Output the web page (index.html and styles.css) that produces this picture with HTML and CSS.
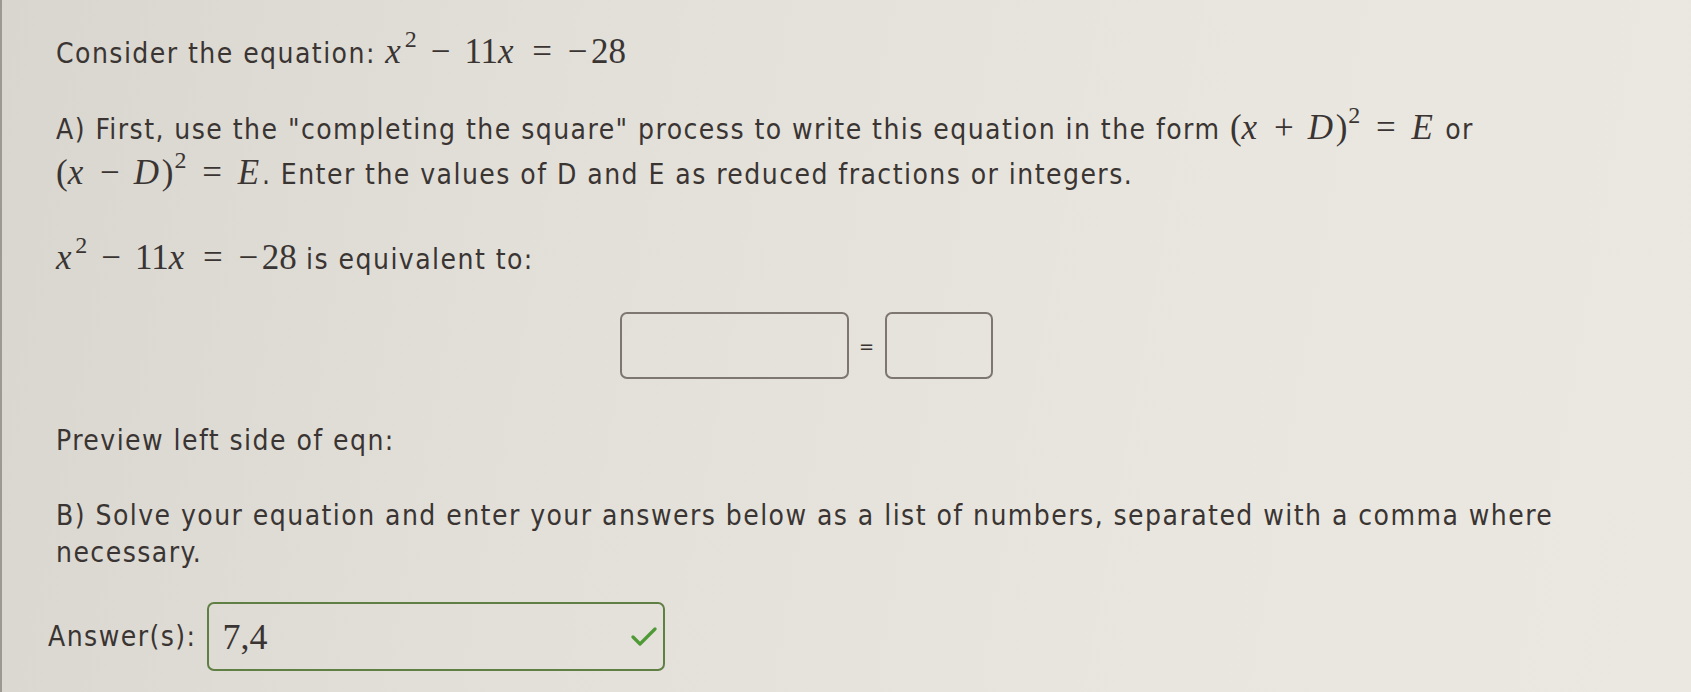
FILE: index.html
```html
<!DOCTYPE html>
<html lang="en">
<head>
  <meta charset="UTF-8">
  <title>Completing the square</title>
  <link rel="stylesheet" href="styles.css">
</head>
<body>
  <div class="problem">
    <p class="line first">Consider the equation: <span class="math"><i>x</i><sup>2</sup><span class="op">−</span>11<i>x</i><span class="rel">=</span><span class="neg">−</span>28</span></p>

    <p class="line part-a">A) First, use the "completing the square" process to write this equation in the form <span class="math">(<i>x</i><span class="op">+</span><i>D</i>)<sup>2</sup><span class="rel">=</span><i>E</i></span> or <span class="math">(<i>x</i><span class="op">−</span><i>D</i>)<sup>2</sup><span class="rel">=</span><i>E</i></span>. Enter the values of D and E as reduced fractions or integers.</p>

    <p class="line equiv"><span class="math"><i>x</i><sup>2</sup><span class="op">−</span>11<i>x</i><span class="rel">=</span><span class="neg">−</span>28</span> is equivalent to:</p>

    <div class="eqn-row">
      <div class="ans-box wide"></div>
      <span class="eq">=</span>
      <div class="ans-box small"></div>
    </div>

    <p class="line preview">Preview left side of eqn:</p>

    <p class="line part-b">B) Solve your equation and enter your answers below as a list of numbers, separated with a comma where necessary.</p>

    <div class="answer-row">
      <span class="answer-label">Answer(s):</span>
      <div class="answer-box">
        <span class="answer-value">7,4</span>
        <svg class="check" width="26" height="20" viewBox="0 0 26 20">
          <polyline points="2,10 9,17 24,2" fill="none" stroke="#4f9a37" stroke-width="3.2" stroke-linecap="round" stroke-linejoin="round"/>
        </svg>
      </div>
    </div>
  </div>
</body>
</html>
```

FILE: styles.css
```css
html, body { height: 100%; }
body {
  margin: 0;
  font-family: 'DejaVu Sans Condensed', 'DejaVu Sans', sans-serif;
  font-size: 28px;
  letter-spacing: 1.45px;
  color: #3a3533;
  background: linear-gradient(100deg, #d9d6cf 0%, #e2dfd8 30%, #e9e6df 70%, #ebe8e2 100%);
  overflow: hidden;
}
.problem {
  padding: 35px 0 0 54px;
  width: 1600px;
  border-left: 2px solid #9c9892;
  height: 100%;
  box-sizing: border-box;
}
.line { margin: 0; line-height: 37px; }

/* math spans, spaced like typeset math */
.math {
  font-family: 'Liberation Serif', 'DejaVu Serif', serif;
  font-size: 35px;
  line-height: 0;
  letter-spacing: 0;
  white-space: nowrap;
}
.math i { font-style: italic; margin-right: 0.08em; }
.math sup { font-size: 24px; vertical-align: 0; position: relative; top: -16px; margin-left: 1px; }
.math .op { margin: 0 0.4em; }
.math .rel { margin: 0 0.45em; }
.math .neg { margin-right: 0.1em; }

.part-a { margin-top: 35px; line-height: 45px; }
.equiv { margin-top: 44px; }
.eqn-row {
  display: flex;
  align-items: center;
  margin: 34px 0 0 564px;
}
.ans-box {
  height: 67px;
  border: 2px solid #7e7670;
  border-radius: 7px;
  box-sizing: border-box;
}
.ans-box.wide { width: 229px; }
.ans-box.small { width: 108px; }
.eq { font-size: 20px; margin: 0 9px 0 10px; }
.preview { margin-top: 43px; }
.part-b { margin-top: 38px; }
.answer-row {
  display: flex;
  align-items: center;
  margin-top: 31px;
  margin-left: -8px;
}
.answer-label { margin-right: 10px; }
.answer-box {
  width: 458px;
  height: 69px;
  box-sizing: border-box;
  border: 2px solid #5f7f45;
  border-radius: 7px;
  display: flex;
  align-items: center;
  justify-content: space-between;
  padding: 0 6px 0 14px;
}
.answer-value {
  font-family: 'Liberation Serif', 'DejaVu Serif', serif;
  font-size: 36px;
  letter-spacing: 0;
}
```
